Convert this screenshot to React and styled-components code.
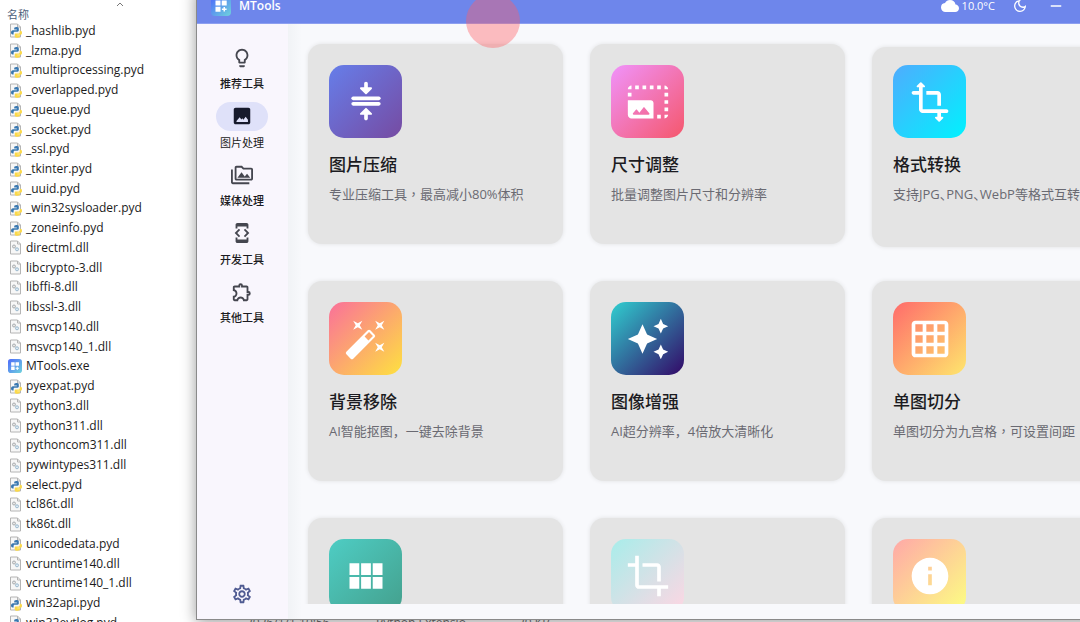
import React from "react";
import styled, { createGlobalStyle } from "styled-components";
import {
    MdAutoAwesome,
    MdAutoFixHigh,
    MdCloud,
    MdCrop,
    MdDeveloperMode,
    MdGridOn,
    MdInfo,
    MdLightbulbOutline,
    MdOutlineDarkMode,
    MdOutlineExtension,
    MdOutlinePermMedia,
    MdOutlineSettings,
    MdRemove,
    MdViewModule
} from "react-icons/md";

const GlobalStyles = createGlobalStyle`
    * {
        box-sizing: border-box;
    }
    body {
        margin: 0;
        overflow: hidden;
        font-family: "Open Sans", "Noto Sans CJK SC", sans-serif;
        font-size: 12px;
    }
    button {
        border: 0;
        padding: 0;
        background: none;
        color: inherit;
        font: inherit;
    }
`;

const Desktop = styled.div`
    position: relative;
    height: 100vh;
    overflow: hidden;
    background-color: #fff;
`;

/* file list */

const Files = styled.table`
    display: block;
    width: 100%;
    color: #1b1b1b;
`;

const FilesHead = styled.thead`
    display: block;
    height: 21px;
`;

const HeadRow = styled.tr`
    display: flex;
`;

const HeadCell = styled.th`
    display: flex;
    flex-direction: column;
    width: 240px;
    padding: 2px 0 0 7px;
    font-size: 11px;
    font-weight: 400;
    line-height: 16px;
    text-align: left;
    color: #4c607a;
`;

const SortMark = styled.svg`
    width: 8px;
    height: 5px;
    margin-right: 7px;
    align-self: center;
`;

const FilesBody = styled.tbody`
    display: flex;
    flex-direction: column;
    height: 612px;
`;

const FileRow = styled.tr`
    display: flex;
    flex: 1;
    align-items: center;
    line-height: 18px;
`;

const FileName = styled.td`
    display: flex;
    align-items: center;
    gap: 4px;
    width: 246px;
    padding: 0 0 0 8px;
    white-space: nowrap;
`;

const FileInfo = styled.td`
    width: ${props => props.$width};
    padding: 0;
    color: #6d6d6d;
`;

const FileSvg = styled.svg`
    width: 14px;
    height: 15px;
`;

/* app window */

const Window = styled.section`
    position: absolute;
    top: -12px;
    right: -90px;
    bottom: 2px;
    left: 196px;
    display: flex;
    flex-direction: column;
    border: 1px solid #8a8a8a;
    background-color: #f8f9fc;
    box-shadow: 0 2px 14px rgba(0, 0, 0, 0.4);
`;

const TitleBar = styled.header`
    display: flex;
    align-items: center;
    height: 35px;
    padding: 0 86px 0 14px;
    border-bottom: 1px solid #8d9ff0;
    background-color: #6e86eb;
    color: #fff;
`;

const AppName = styled.h1`
    flex: 1;
    margin: 0 0 0 8px;
    font-size: 12px;
    font-weight: 600;
    line-height: 18px;
`;

const Weather = styled.div`
    display: flex;
    align-items: center;
    gap: 3px;
    margin-right: 16px;
    font-size: 11px;
    line-height: 14px;
`;

const BarButton = styled.button`
    display: flex;
    align-items: center;
    justify-content: center;
    width: 18px;
    height: 18px;
    margin-right: 18px;
`;

const Body = styled.div`
    display: flex;
    flex: 1;
    min-height: 0;
`;

const Sidebar = styled.nav`
    display: flex;
    flex-direction: column;
    justify-content: space-between;
    align-items: center;
    width: 91px;
    padding: 19px 1px 14px 0;
    background-color: #f9f6fd;
    color: #45464f;
`;

const NavList = styled.div`
    display: grid;
    grid-template-rows: repeat(5, 1fr);
    height: 293px;
`;

const NavItem = styled.button`
    display: flex;
    flex-direction: column;
    align-items: center;
    gap: 4px;
    font-size: 11px;
    font-weight: ${props => (props.$active ? 400 : 500)};
    line-height: 16px;
    color: #1b1b21;
`;

const Indicator = styled.span`
    display: flex;
    align-items: center;
    justify-content: center;
    width: 52px;
    height: 29px;
    border-radius: 15px;
    color: ${props => (props.$active ? "#171a2c" : "#45464f")};
    background-color: ${props => (props.$active ? "#dfe1f9" : "transparent")};
`;

const SettingsButton = styled.button`
    display: flex;
    color: #505b92;
`;

const Main = styled.main`
    flex: 1;
    min-width: 0;
    padding-bottom: 15px;
    background-image: linear-gradient(to right, #f1f3f6, #f8f9fc 14px);
`;

const Scroller = styled.div`
    height: 100%;
    padding: 20px 20px 0;
    overflow: hidden;
`;

const CardGrid = styled.div`
    display: grid;
    grid-template-columns: repeat(3, 255px);
    grid-auto-rows: 200px;
    gap: 37px 27px;
`;

const Card = styled.article`
    height: 200px;
    margin-top: ${props => (props.$shifted ? 3 : 0)}px;
    padding: ${props => (props.$shifted ? 18 : 21)}px 21px 0;
    border-radius: 14px;
    background-color: #e4e4e4;
    box-shadow: 0 0 4px #e0e1e3;
    white-space: nowrap;
`;

const Tile = styled.div`
    display: flex;
    align-items: center;
    justify-content: center;
    width: 73px;
    height: 73px;
    border-radius: 15px;
    background-image: linear-gradient(135deg, ${props => props.$from}, ${props => props.$to});
    color: #fff;
`;

const CardTitle = styled.h2`
    margin: 15px 0 6px;
    font-size: 17px;
    font-weight: 500;
    line-height: 24px;
    color: #1b1b21;
`;

const CardText = styled.p`
    margin: 0;
    font-family: ${props => (props.$centered
        ? '"Open Sans", "Noto Sans CJK TC", sans-serif'
        : '"Open Sans", "Noto Sans CJK SC", sans-serif')};
    font-size: 13px;
    font-feature-settings: ${props => (props.$halfMarks ? '"halt"' : "normal")};
    line-height: 22px;
    color: #6a6a72;
`;

const ClickSpot = styled.div`
    position: absolute;
    top: -6px;
    left: 466px;
    width: 54px;
    height: 54px;
    border-radius: 50%;
    background-color: rgba(255, 95, 100, 0.4);
`;

const Logo = ({ size, id }) => (
    <svg width={size} height={size} viewBox="0 0 20 20">
        <defs>
            <linearGradient id={id} x1="0" y1="0" x2="1" y2="1">
                <stop offset="0" stopColor="#4d68fb" />
                <stop offset="1" stopColor="#6fd3dc" />
            </linearGradient>
        </defs>
        <rect width="20" height="20" rx="4" fill={`url(#${id})`} />
        <path
            fill="#fff"
            d="M4.500 4.500h5v5h-5zM10.700 4.500h5v5h-5zM4.500 10.700h5v5h-5zM12.500 10.900h1.500v1.600h1.600v1.500h-1.600v1.600h-1.500v-1.600h-1.600v-1.500h1.600z"
        />
    </svg>
);

const Page = () => (
    <path d="M2.500 1h7l3 3v10h-10z M9.500 1v3h3" fill="#f7f7f7" stroke="#b4b4b4" />
);

const PydIcon = () => (
    <FileSvg viewBox="0 0 14 15">
        <Page />
        <path d="M8.500 4c-2 0-2.300.8-2.300 1.600v1h2.600v.6H5C3.700 7.200 3 8.200 3 9.500s.7 2 1.600 2h1V10c0-.8.6-1.300 1.300-1.300h2.700c.8 0 1.200-.5 1.200-1.200V5.600C10.800 4.500 10 4 8.500 4z" fill="#3a78b0" />
        <path d="M9.600 14.800c2 0 2.400-.8 2.400-1.500v-1.100H9.300v-.5h3.300c1 0 1.400-.9 1.400-2s-.5-2-1.400-2h-.9v1.200c0 1-.6 1.500-1.300 1.500H7.900c-.8 0-1.200.5-1.200 1.100v1.700c0 1.100 1 1.600 2.900 1.600z" fill="#fbd94a" />
    </FileSvg>
);

const DllIcon = () => (
    <FileSvg viewBox="0 0 14 15">
        <Page />
        <circle cx="6" cy="6.500" r="1.500" fill="#e6e6e6" stroke="#a9adb0" />
        <circle cx="9" cy="9.300" r="1.500" fill="#e1edf5" stroke="#9dbace" />
    </FileSvg>
);

const ExeIcon = () => <Logo size={14} id="exe-logo" />;

const CompressIcon = () => (
    <svg width="44" height="44" viewBox="0 0 24 24" fill="currentColor">
        <path d="M14.790 4H13V2c0-.55-.45-1-1-1s-1 .45-1 1v2H9.210c-.45 0-.67.54-.35.85l2.790 2.790c.2.2.51.2.71 0l2.790-2.790c.31-.31.09-.85-.36-.85z" />
        <path d="M9.210 19H11v2c0 .55.45 1 1 1s1-.45 1-1v-2h1.790c.45 0 .67-.54.35-.85l-2.790-2.790a.5.5 0 0 0-.71 0l-2.790 2.790c-.31.31-.09.85.36.85z" />
        <rect x="4" y="9" width="16" height="2" rx="1" />
        <rect x="4" y="12" width="16" height="2" rx="1" />
    </svg>
);

const ResizeIcon = () => (
    <svg width="44" height="44" viewBox="0 0 24 24" fill="currentColor">
        <path d="M21 15h2v2h-2zM21 11h2v2h-2zM23 19h-2v2c1 0 2-1 2-2zM13 3h2v2h-2zM21 7h2v2h-2zM21 3v2h2c0-1-1-2-2-2zM1 7h2v2H1zM17 3h2v2h-2zM17 19h2v2h-2zM3 3C2 3 1 4 1 5h2zM9 3h2v2H9zM5 3h2v2H5z" />
        <path fillRule="evenodd" d="M1 11v8c0 1.100.9 2 2 2h12v-8.500c0-.8-.7-1.500-1.500-1.500zM4.200 19c-.4 0-.6-.5-.4-.8l1.500-1.900c.2-.3.600-.3.800 0l1.200 1.500 2.100-2.700c.2-.3.600-.3.800 0l2.500 3.100c.3.300 0 .8-.4.800z" />
    </svg>
);

const TransformIcon = () => (
    <svg width="44" height="44" viewBox="0 0 24 24" fill="currentColor">
        <path d="M21 18c.55 0 1-.45 1-1s-.45-1-1-1H8V4h.79c.45 0 .67-.54.35-.85L7.350 1.360a.5.5 0 0 0-.71 0L4.860 3.150c-.31.31-.09.85.36.85H6v2H3c-.55 0-1 .45-1 1s.45 1 1 1h3v8c0 1.100.9 2 2 2h8v2h-.79c-.45 0-.67.54-.35.85l1.790 1.790c.2.2.51.2.71 0l1.790-1.790c.31-.31.09-.85-.36-.85H18v-2z" />
        <path d="M10 8h6v6h2V8c0-1.100-.9-2-2-2h-6z" />
    </svg>
);

const PictureIcon = () => (
    <svg width="22" height="22" viewBox="0 0 24 24" fill="currentColor">
        <path fillRule="evenodd" d="M5 3h14c1.100 0 2 .9 2 2v14c0 1.100-.9 2-2 2H5c-1.100 0-2-.9-2-2V5c0-1.100.9-2 2-2zM6 18.500h12.500v-2.300L16 12.800l-2.500 3.200-1.200-1.500-1 1.300-1.800-2.500L6 17.500z" />
    </svg>
);

const fileIcons = { pyd: PydIcon, dll: DllIcon, exe: ExeIcon };

const files = [
    "_hashlib.pyd",
    "_lzma.pyd",
    "_multiprocessing.pyd",
    "_overlapped.pyd",
    "_queue.pyd",
    "_socket.pyd",
    "_ssl.pyd",
    "_tkinter.pyd",
    "_uuid.pyd",
    "_win32sysloader.pyd",
    "_zoneinfo.pyd",
    "directml.dll",
    "libcrypto-3.dll",
    "libffi-8.dll",
    "libssl-3.dll",
    "msvcp140.dll",
    "msvcp140_1.dll",
    "MTools.exe",
    "pyexpat.pyd",
    "python3.dll",
    "python311.dll",
    "pythoncom311.dll",
    "pywintypes311.dll",
    "select.pyd",
    "tcl86t.dll",
    "tk86t.dll",
    "unicodedata.pyd",
    "vcruntime140.dll",
    "vcruntime140_1.dll",
    "win32api.pyd",
    "win32evtlog.pyd"
];

const navItems = [
    { label: "推荐工具", icon: <MdLightbulbOutline size={22} /> },
    { label: "图片处理", icon: <PictureIcon />, active: true },
    { label: "媒体处理", icon: <MdOutlinePermMedia size={22} /> },
    { label: "开发工具", icon: <MdDeveloperMode size={22} /> },
    { label: "其他工具", icon: <MdOutlineExtension size={22} /> }
];

const tools = [
    { title: "图片压缩", text: "专业压缩工具，最高减小80%体积", centered: true, from: "#667eea", to: "#764ba2", icon: <CompressIcon /> },
    { title: "尺寸调整", text: "批量调整图片尺寸和分辨率", from: "#f093fb", to: "#f5576c", icon: <ResizeIcon /> },
    { title: "格式转换", text: "支持JPG、PNG、WebP等格式互转", halfMarks: true, shifted: true, from: "#4facfe", to: "#00f2fe", icon: <TransformIcon /> },
    { title: "背景移除", text: "AI智能抠图，一键去除背景", from: "#fa709a", to: "#fee140", icon: <MdAutoFixHigh size={44} /> },
    { title: "图像增强", text: "AI超分辨率，4倍放大清晰化", from: "#30cfd0", to: "#330867", icon: <MdAutoAwesome size={44} /> },
    { title: "单图切分", text: "单图切分为九宫格，可设置间距", centered: true, from: "#ff6b6b", to: "#fee66d", icon: <MdGridOn size={44} /> },
    { from: "#4ecdc4", to: "#44a08d", icon: <MdViewModule size={44} /> },
    { from: "#a8edea", to: "#fed6e3", icon: <MdCrop size={44} /> },
    { from: "#ffa8a8", to: "#fcff82", icon: <MdInfo size={44} /> }
];

const FileTable = () => (
    <Files>
        <FilesHead>
            <HeadRow>
                <HeadCell>
                    <SortMark viewBox="0 0 8 5">
                        <path d="M1 4l3-3 3 3" fill="none" stroke="#777" />
                    </SortMark>
                    名称
                </HeadCell>
            </HeadRow>
        </FilesHead>
        <FilesBody>
            {files.map((name, index) => {
                const Icon = fileIcons[name.split(".").pop()];
                return (
                    <FileRow key={name}>
                        <FileName><Icon />{name}</FileName>
                        {index === files.length - 1 && (
                            <>
                                <FileInfo $width="130px">2026/1/1 10:56</FileInfo>
                                <FileInfo $width="142px">Python Extensio...</FileInfo>
                                <FileInfo $width="60px">20 KB</FileInfo>
                            </>
                        )}
                    </FileRow>
                );
            })}
        </FilesBody>
    </Files>
);

const App = () => (
    <>
        <GlobalStyles />
        <Desktop>
            <FileTable />
            <Window>
                <TitleBar>
                    <Logo size={20} id="bar-logo" />
                    <AppName>MTools</AppName>
                    <Weather><MdCloud size={18} />10.0°C</Weather>
                    <BarButton aria-label="Theme"><MdOutlineDarkMode size={16} /></BarButton>
                    <BarButton aria-label="Minimize"><MdRemove size={18} /></BarButton>
                </TitleBar>
                <Body>
                    <Sidebar>
                        <NavList>
                            {navItems.map(item => (
                                <NavItem key={item.label} $active={item.active}>
                                    <Indicator $active={item.active}>{item.icon}</Indicator>
                                    {item.label}
                                </NavItem>
                            ))}
                        </NavList>
                        <SettingsButton aria-label="Settings">
                            <MdOutlineSettings size={22} />
                        </SettingsButton>
                    </Sidebar>
                    <Main>
                        <Scroller>
                            <CardGrid>
                                {tools.map(tool => (
                                    <Card key={tool.from} $shifted={tool.shifted}>
                                        <Tile $from={tool.from} $to={tool.to}>{tool.icon}</Tile>
                                        {tool.title && (
                                            <>
                                                <CardTitle>{tool.title}</CardTitle>
                                                <CardText $centered={tool.centered} $halfMarks={tool.halfMarks}>
                                                    {tool.text}
                                                </CardText>
                                            </>
                                        )}
                                    </Card>
                                ))}
                            </CardGrid>
                        </Scroller>
                    </Main>
                </Body>
            </Window>
            <ClickSpot />
        </Desktop>
    </>
);

export default App;
